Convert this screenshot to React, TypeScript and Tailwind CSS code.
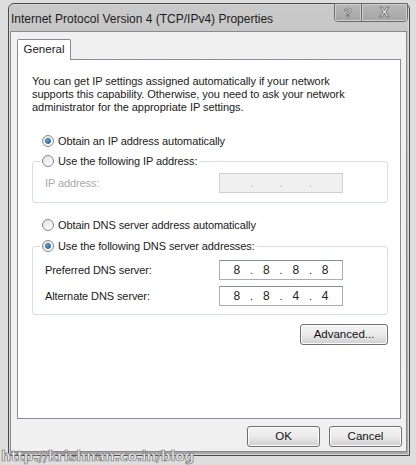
import React from 'react';

const font = { fontFamily: '"Liberation Sans", Arial, sans-serif' };

const Radio: React.FC<{ checked?: boolean }> = ({ checked }) => (
  <span className="w-[12px] h-[12px] rounded-full border border-[#8a8a8a] bg-gradient-to-br from-[#e2e2e2] to-[#ffffff] flex items-center justify-center shrink-0">
    {checked && (
      <span className="w-[6px] h-[6px] rounded-full bg-gradient-to-br from-[#7ec3f0] to-[#1b5f9e] border border-[#2a5f8f]" />
    )}
  </span>
);

const IpField: React.FC<{ parts?: string[]; disabled?: boolean }> = ({ parts, disabled }) => (
  <div
    className={`w-[124px] h-[20px] px-[5px] flex items-center border ${
      disabled ? 'bg-[#f0f0f0] border-[#d0d0d0] text-[#b0b0b0]' : 'bg-white border-[#abadb3] border-t-[#888c94] text-[#222]'
    }`}
  >
    {[0, 1, 2, 3].map((i) => (
      <React.Fragment key={i}>
        <span className="w-[24px] text-center text-[12px]">{parts ? parts[i] : ''}</span>
        {i < 3 && <span className="w-[6px] text-center text-[11px]">.</span>}
      </React.Fragment>
    ))}
  </div>
);

const Button: React.FC<{ label: string; w: string }> = ({ label, w }) => (
  <button
    className={`${w} h-[21px] rounded-[3px] border border-[#707070] bg-gradient-to-b from-[#f2f2f2] via-[#ebebeb] to-[#cfcfcf] text-[11.5px] text-[#111] flex items-center justify-center shadow-[inset_0_0_0_1px_#fcfcfc]`}
  >
    {label}
  </button>
);

export default function App() {
  return (
    <div className="w-[416px] h-[465px] bg-[#dedede] overflow-hidden relative text-[#1a1a1a]" style={font}>
      <div className="ml-[8px] mt-[3px] w-[402px] h-[453px] rounded-t-[6px] border border-[#4a4a4a] bg-gradient-to-b from-[#c9c9c9] via-[#b9b9b9] to-[#a9a9a9] flex flex-col shadow-[inset_0_0_0_1px_#d8d8d8]">
        {/* title bar */}
        <div className="h-[27px] flex items-start justify-between pl-[2px] pr-[1px]">
          <span className="mt-[6px] text-[12px] text-[#1c1c1c]">Internet Protocol Version 4 (TCP/IPv4) Properties</span>
          <div className="flex h-[19px] -mt-[1px] border border-[#6a6a6a] rounded-b-[4px] overflow-hidden">
            <div className="w-[27px] flex items-center justify-center border-r border-[#6a6a6a] bg-gradient-to-b from-[#b8b8b8] to-[#a4a4a4] shadow-[inset_0_0_0_1px_#cfcfcf]">
              <span className="text-[13px] font-bold text-white [-webkit-text-stroke:0.6px_#4a4a4a]">?</span>
            </div>
            <div className="w-[45px] flex items-center justify-center bg-gradient-to-b from-[#b8b8b8] to-[#a4a4a4] shadow-[inset_0_0_0_1px_#cfcfcf]">
              <span className="text-[14px] font-bold text-white [-webkit-text-stroke:0.6px_#4a4a4a]">X</span>
            </div>
          </div>
        </div>

        {/* client area */}
        <div className="ml-[1px] mr-[2px] h-[421px] bg-[#f0f0f0] border border-[#8a8a8a] pl-[6px] pt-[7px] flex flex-col">
          {/* tab header */}
          <div className="w-[54px] h-[21px] bg-white border border-b-0 border-[#898c95] rounded-t-[2px] flex items-center justify-center text-[11.5px] relative z-10 -mb-px">
            General
          </div>
          {/* tab panel */}
          <div className="w-[384px] h-[360px] bg-white border border-[#898c95] flex flex-col pl-[14px] pt-[15px]">
            <p className="text-[11px] leading-[13px] w-[322px] tracking-[-0.05px]">
              You can get IP settings assigned automatically if your network supports this capability. Otherwise, you need to ask your network administrator for the appropriate IP settings.
            </p>

            <label className="mt-[20px] ml-[10px] flex items-center gap-[4px] text-[11px] h-[14px] tracking-[-0.1px]">
              <Radio checked />
              Obtain an IP address automatically
            </label>

            <fieldset className="mt-[6px] w-[356px] h-[49px] border border-[#d5dfe5] rounded-[3px] px-[7px]">
              <legend className="px-[2px]">
                <span className="flex items-center gap-[4px] text-[11px] h-[14px] tracking-[-0.1px]">
                  <Radio />
                  Use the following IP address:
                </span>
              </legend>
              <div className="flex items-center justify-between mt-[5px] pl-[5px] pr-[37px]">
                <span className="text-[11px] text-[#a8a8a8] tracking-[-0.1px]">IP address:</span>
                <IpField disabled />
              </div>
            </fieldset>

            <label className="mt-[15px] ml-[10px] flex items-center gap-[4px] text-[11px] h-[14px] tracking-[-0.1px]">
              <Radio />
              Obtain DNS server address automatically
            </label>

            <fieldset className="mt-[7px] w-[356px] h-[76px] border border-[#d5dfe5] rounded-[3px] px-[7px]">
              <legend className="px-[2px]">
                <span className="flex items-center gap-[4px] text-[11px] h-[14px] tracking-[-0.1px]">
                  <Radio checked />
                  Use the following DNS server addresses:
                </span>
              </legend>
              <div className="flex flex-col gap-[6px] mt-[7px] pl-[5px] pr-[37px]">
                <div className="flex items-center justify-between">
                  <span className="text-[11px] tracking-[-0.1px]">Preferred DNS server:</span>
                  <IpField parts={['8', '8', '8', '8']} />
                </div>
                <div className="flex items-center justify-between">
                  <span className="text-[11px] tracking-[-0.1px]">Alternate DNS server:</span>
                  <IpField parts={['8', '8', '4', '4']} />
                </div>
              </div>
            </fieldset>

            <div className="mt-[9px] w-[356px] flex justify-end">
              <Button label="Advanced..." w="w-[88px]" />
            </div>
          </div>

          {/* bottom buttons */}
          <div className="mt-[7px] w-[385px] flex justify-end gap-[9px]">
            <Button label="OK" w="w-[73px]" />
            <Button label="Cancel" w="w-[73px]" />
          </div>
        </div>
      </div>

      {/* watermark */}
      <div className="absolute left-[1px] bottom-[-2px] text-[14px] font-bold text-[#ececec] [-webkit-text-stroke:0.7px_#6e6e6e] tracking-[-0.3px]" style={{ fontFamily: '"DejaVu Sans", sans-serif' }}>
        http://krishnan.co.in/blog
      </div>
    </div>
  );
}
